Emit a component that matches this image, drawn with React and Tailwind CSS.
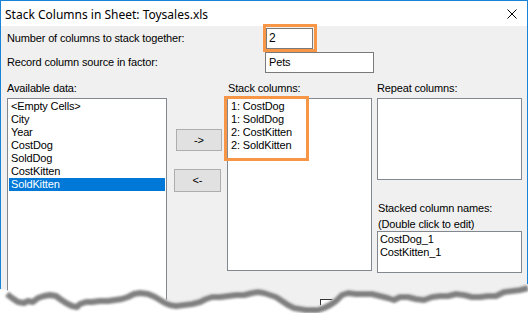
import React from 'react';

const AVAILABLE = ['<Empty Cells>', 'City', 'Year', 'CostDog', 'SoldDog', 'CostKitten', 'SoldKitten'];
const STACKED = ['1: CostDog', '1: SoldDog', '2: CostKitten', '2: SoldKitten'];
const NAMES = ['CostDog_1', 'CostKitten_1'];

// torn paper edge along the bottom of the screenshot
const EDGE = [
  [7, 290], [12, 294], [18, 298], [24, 299], [28, 297], [33, 298], [38, 294], [44, 292], [50, 291], [56, 292],
  [60, 295], [66, 299], [72, 302], [77, 303], [80, 300], [86, 298], [92, 298], [100, 297], [108, 297], [115, 296],
  [122, 295], [128, 293], [134, 290], [140, 289], [148, 290], [155, 293], [160, 296], [165, 299], [170, 301],
  [176, 302], [184, 301], [192, 300], [200, 298], [206, 295], [212, 293], [220, 293], [228, 292], [236, 291],
  [244, 291], [252, 289], [258, 288], [264, 289], [270, 291], [276, 293], [282, 297], [288, 301], [294, 304],
  [300, 305], [306, 306], [312, 306], [318, 306], [324, 304], [330, 301], [336, 297], [342, 291], [348, 289],
  [356, 290], [364, 290], [372, 290], [380, 292], [388, 294], [394, 296], [400, 293], [408, 293], [416, 295],
  [424, 296], [432, 293], [440, 292], [448, 292], [456, 290], [464, 291], [472, 293], [480, 293], [488, 292],
  [496, 292], [504, 288], [512, 287], [520, 286], [528, 284],
];

function TornEdge() {
  const line = EDGE.map(([x, y]) => `${x},${y}`).join(' L');
  const fill = `M0,313 L0,289 L${line} L528,313 Z`;
  return (
    <svg className="absolute inset-0 pointer-events-none" width="528" height="313" viewBox="0 0 528 313">
      <defs>
        <filter id="soft" x="-5%" y="-50%" width="110%" height="200%">
          <feGaussianBlur stdDeviation="1.1" />
        </filter>
      </defs>
      <path d={fill} fill="#ffffff" />
      <path d={`M${line}`} transform="translate(0 4)" fill="none" stroke="#808080" strokeWidth="6" strokeLinejoin="round" filter="url(#soft)" />
    </svg>
  );
}

function ListBox({ className, children }) {
  return <div className={`bg-white border border-[#828790] ${className}`}>{children}</div>;
}

export default function App() {
  return (
    <div className="relative w-[528px] h-[313px] overflow-hidden bg-white text-black text-[11px] leading-[13px] tracking-[-0.15px] font-['Liberation_Sans',Arial,sans-serif]">
      <div className="h-full flex flex-col border-x border-t border-[#1883d7]">
        {/* title bar */}
        <div className="h-[25px] shrink-0 bg-white flex items-center pl-[4px] pr-[10px] tracking-normal">
          <span className="text-[12px] font-['Noto_Sans',sans-serif] mt-[1px]">Stack Columns in Sheet: Toysales.xls</span>
          <svg className="ml-auto" width="10" height="10" viewBox="0 0 10 10">
            <path d="M0.5 0.5 L9.5 9.5 M9.5 0.5 L0.5 9.5" stroke="#000" strokeWidth="1" />
          </svg>
        </div>

        <div className="flex-1 bg-[#f0f0f0] pl-[6px]">
          <div className="mt-[2px] flex items-center h-[21px]">
            <span className="w-[259px]">Number of columns to stack together:</span>
            <div className="relative w-[47px] h-[21px] border border-[#7a7a7a] bg-white px-[2px] flex items-center text-[12px]">
              2
              <div className="absolute left-[-4px] right-[-5px] top-[-5px] bottom-[-4px] border-[3px] border-[#f79646]" />
            </div>
          </div>
          <div className="mt-[3px] flex items-center h-[21px]">
            <span className="w-[258px]">Record column source in factor:</span>
            <div className="w-[109px] h-[21px] border border-[#7a7a7a] bg-white px-[3px] flex items-center">Pets</div>
          </div>

          <div className="mt-[9px] flex">
            <div className="w-[160px] flex flex-col">
              <span className="h-[13px]">Available data:</span>
              <ListBox className="mt-[3px] h-[210px] pt-[1px]">
                {AVAILABLE.map((item) => (
                  <div
                    key={item}
                    className={item === 'SoldKitten' ? 'mx-[1px] pl-[2px] h-[13px] bg-[#0078d7] text-white' : 'pl-[3px] h-[13px]'}
                  >
                    {item}
                  </div>
                ))}
              </ListBox>
            </div>

            <div className="ml-[7px] w-[48px] flex flex-col">
              <button className="mt-[47px] ml-[2px] w-[46px] h-[22px] bg-[#e1e1e1] border border-[#adadad] flex items-center justify-center">-&gt;</button>
              <button className="mt-[18px] w-[47px] h-[23px] bg-[#e1e1e1] border border-[#adadad] flex items-center justify-center">&lt;-</button>
            </div>

            <div className="ml-[5px] w-[145px] flex flex-col">
              <span className="h-[13px] pl-[1px]">Stack columns:</span>
              <ListBox className="relative mt-[3px] h-[173px] pt-[1px] pl-[3px]">
                {STACKED.map((item) => (
                  <div key={item} className="h-[13px]">{item}</div>
                ))}
                <div className="absolute left-[-4px] top-[-3px] w-[85px] h-[65px] border-[3px] border-[#f79646]" />
              </ListBox>
              <div className="mt-[28px] ml-[93px] w-[13px] h-[13px] border border-[#333] bg-white" />
            </div>

            <div className="ml-[5px] w-[145px] flex flex-col">
              <span className="h-[13px]">Repeat columns:</span>
              <ListBox className="mt-[3px] h-[82px]" />
              <span className="mt-[22px] h-[13px] pl-[1px]">Stacked column names:</span>
              <span className="mt-[3px] h-[13px] pl-[1px]">(Double click to edit)</span>
              <ListBox className="h-[42px] pt-[1px] pl-[2px]">
                {NAMES.map((item) => (
                  <div key={item} className="h-[13px]">{item}</div>
                ))}
              </ListBox>
            </div>
          </div>
        </div>
      </div>
      <TornEdge />
    </div>
  );
}
